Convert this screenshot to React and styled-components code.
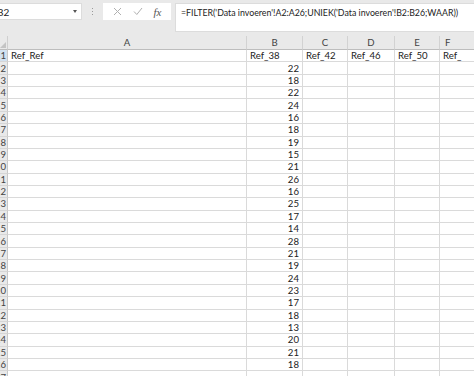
import React from 'react'
import styled, { createGlobalStyle } from 'styled-components'

const GlobalStyle = createGlobalStyle`
	html, body {
		margin: 0;
		padding: 0;
		background: #ffffff;
	}
	body {
		font-family: Lato, 'Liberation Sans', sans-serif;
	}
`

const Window = styled.div`
	width: 474px;
	height: 376px;
	overflow: hidden;
	background: #ffffff;
	display: flex;
	flex-direction: column;
`

const FormulaBar = styled.div`
	display: flex;
	align-items: flex-start;
	height: 36px;
	padding-top: 3px;
	box-sizing: border-box;
	background: #e9e9e9;
	flex-shrink: 0;
`

const NameBox = styled.div`
	display: flex;
	align-items: center;
	justify-content: space-between;
	width: 88px;
	height: 17px;
	margin-left: -6px;
	padding: 0 4px 0 2px;
	box-sizing: border-box;
	background: #ffffff;
	border: 1px solid #dcdcdc;
	font-size: 10px;
	color: #222;
`

const Caret = styled.span`
	width: 0;
	height: 0;
	border-left: 2px solid transparent;
	border-right: 2px solid transparent;
	border-top: 3px solid #555;
`

const Divider = styled.div`
	width: 21px;
	height: 17px;
	display: flex;
	flex-direction: column;
	align-items: center;
	justify-content: center;
	gap: 2px;
	& span {
		width: 1px;
		height: 1px;
		background: #9a9a9a;
	}
`

const ButtonBox = styled.div`
	display: flex;
	align-items: center;
	justify-content: space-around;
	width: 68px;
	height: 17px;
	padding: 0 4px;
	box-sizing: border-box;
	background: #ffffff;
`

const Fx = styled.span`
	font-family: 'Liberation Serif', serif;
	font-style: italic;
	font-size: 11px;
	color: #555;
`

const FormulaInput = styled.div`
	flex: 1;
	height: 29px;
	margin-left: 4px;
	padding: 3px 0 0 5px;
	box-sizing: border-box;
	background: #ffffff;
	border: 1px solid #dcdcdc;
	border-right: none;
	font-size: 8.8px;
	color: #222;
	white-space: nowrap;
	overflow: hidden;
`

const Sheet = styled.div`
	display: grid;
	grid-template-columns: 8px 239px 56px 45px 47px 45px 70px;
	grid-auto-rows: 12.37px;
	grid-template-rows: 14px;
	background: #ffffff;
	font-size: 9.6px;
	color: #222;
`

const Corner = styled.div`
	position: relative;
	background: #e9e9e9;
	border-right: 1px solid #cfcfcf;
	border-bottom: 1px solid #bdbdbd;
	box-sizing: border-box;
	&::after {
		content: '';
		position: absolute;
		right: 1px;
		bottom: 1px;
		border-left: 6px solid transparent;
		border-bottom: 6px solid #c4c4c4;
	}
`

const ColHead = styled.div`
	display: flex;
	align-items: center;
	justify-content: ${p => (p.partial ? 'flex-start' : 'center')};
	padding-left: ${p => (p.partial ? '5px' : '0')};
	background: #e9e9e9;
	border-right: 1px solid #d2d2d2;
	border-bottom: 1px solid #bdbdbd;
	box-sizing: border-box;
	color: #444;
	font-size: 9.6px;
`

const RowHead = styled.div`
	display: flex;
	align-items: center;
	justify-content: flex-end;
	overflow: hidden;
	background: ${p => (p.active ? '#d2e1f0' : '#e9e9e9')};
	border-right: 1px solid #c8c8c8;
	border-bottom: 1px solid #d6d6d6;
	box-sizing: border-box;
	color: #444;
	font-size: 9.6px;
	padding-right: 1px;
	white-space: nowrap;
`

const Cell = styled.div`
	display: flex;
	align-items: center;
	justify-content: ${p => (p.num ? 'flex-end' : 'flex-start')};
	padding: 0 3px;
	border-right: 1px solid #dadada;
	border-bottom: 1px solid #dadada;
	box-sizing: border-box;
	white-space: nowrap;
	overflow: hidden;
`

const columns = ['A', 'B', 'C', 'D', 'E', 'F']
const headers = ['Ref_Ref', 'Ref_38', 'Ref_42', 'Ref_46', 'Ref_50', 'Ref_']
const values = [22, 18, 22, 24, 16, 18, 19, 15, 21, 26, 16, 25, 17, 14, 28, 21, 19, 24, 23, 17, 18, 13, 20, 21, 18]

const CrossIcon = () => (
	<svg width="9" height="9" viewBox="0 0 9 9">
		<path d="M1 1 L8 8 M8 1 L1 8" stroke="#b0b0b0" strokeWidth="1" fill="none" />
	</svg>
)

const CheckIcon = () => (
	<svg width="10" height="9" viewBox="0 0 10 9">
		<path d="M1 4.5 L3.8 7.5 L9 1" stroke="#b0b0b0" strokeWidth="1" fill="none" />
	</svg>
)

export default function App() {
	return (
		<Window>
			<GlobalStyle />
			<FormulaBar>
				<NameBox>
					<span>B2</span>
					<Caret />
				</NameBox>
				<Divider>
					<span />
					<span />
					<span />
				</Divider>
				<ButtonBox>
					<CrossIcon />
					<CheckIcon />
					<Fx>fx</Fx>
				</ButtonBox>
				<FormulaInput>=FILTER('Data invoeren'!A2:A26;UNIEK('Data invoeren'!B2:B26;WAAR))</FormulaInput>
			</FormulaBar>
			<Sheet>
				<Corner />
				{columns.map(c => (
					<ColHead key={c} partial={c === 'F'}>
						{c}
					</ColHead>
				))}
				<RowHead active>1</RowHead>
				{headers.map(h => (
					<Cell key={h}>{h}</Cell>
				))}
				{values.map((v, i) => (
					<React.Fragment key={i}>
						<RowHead>{i + 2}</RowHead>
						<Cell />
						<Cell num>{v}</Cell>
						<Cell />
						<Cell />
						<Cell />
						<Cell />
					</React.Fragment>
				))}
				<RowHead>27</RowHead>
				<Cell />
				<Cell num />
				<Cell />
				<Cell />
				<Cell />
				<Cell />
			</Sheet>
		</Window>
	)
}
